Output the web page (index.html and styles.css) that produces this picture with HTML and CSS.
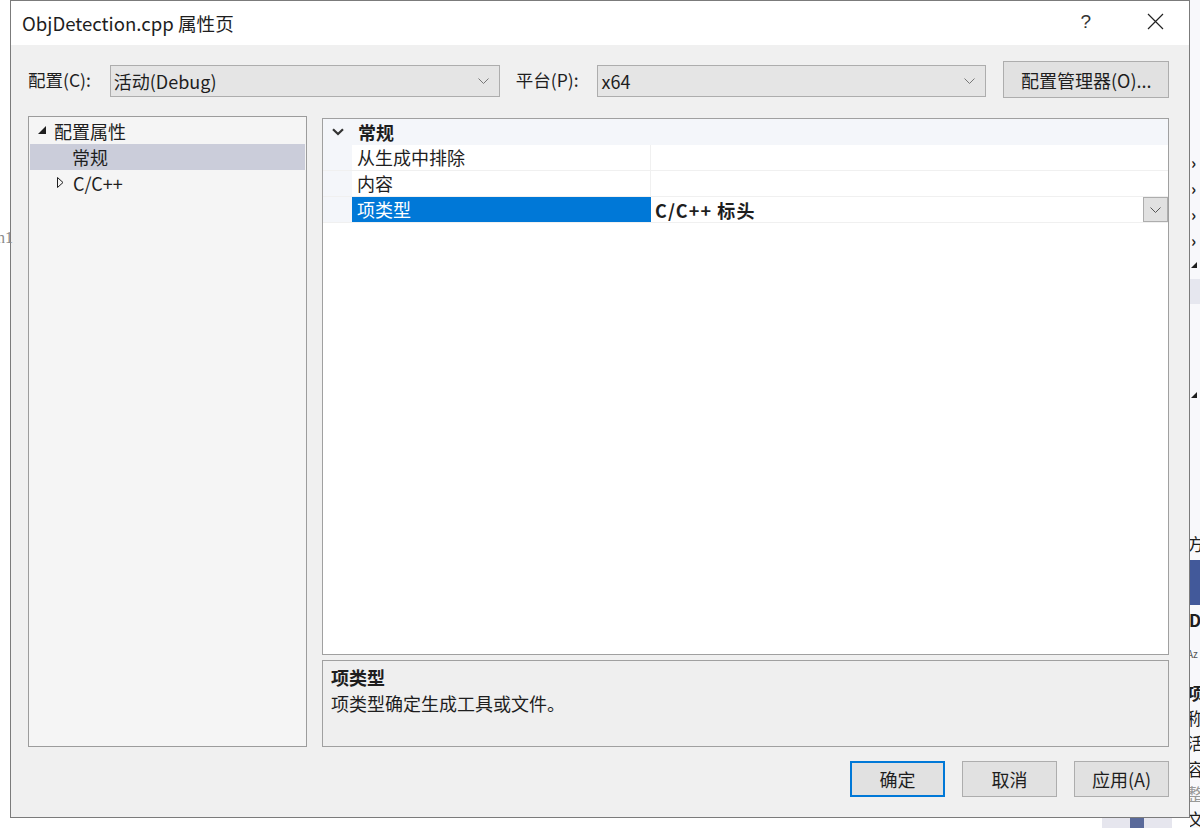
FILE: index.html
```html
<!DOCTYPE html>
<html lang="zh-CN">

<head>
    <meta charset="UTF-8">
    <meta name="viewport" content="width=device-width, initial-scale=1.0">
    <title>ObjDetection.cpp 属性页</title>
    <link rel="stylesheet" href="styles.css">
</head>

<body>
    <div class="desktop">
        <div class="side-left"><span class="stray">n1</span></div>

        <div class="dialog">
            <div class="titlebar">
                <span class="title">ObjDetection.cpp 属性页</span>
                <span class="title-help">?</span>
                <span class="title-close">
                    <svg width="17" height="17" viewBox="0 0 17 17">
                        <path d="M1 1 L16 16 M16 1 L1 16" stroke="#222" stroke-width="1.2" fill="none" />
                    </svg>
                </span>
            </div>

            <div class="content">
                <div class="config-row">
                    <span class="label label-config">配置(C):</span>
                    <div class="combo combo-config">
                        <span>活动(Debug)</span>
                        <svg class="combo-arrow" width="11" height="6" viewBox="0 0 11 6">
                            <path d="M0.5 0.5 L5.5 5.5 L10.5 0.5" stroke="#777" fill="none" />
                        </svg>
                    </div>
                    <span class="label label-platform">平台(P):</span>
                    <div class="combo combo-platform">
                        <span>x64</span>
                        <svg class="combo-arrow" width="11" height="6" viewBox="0 0 11 6">
                            <path d="M0.5 0.5 L5.5 5.5 L10.5 0.5" stroke="#777" fill="none" />
                        </svg>
                    </div>
                    <button class="btn btn-manager">配置管理器(O)...</button>
                </div>

                <div class="main">
                    <div class="tree">
                        <div class="tree-item">
                            <svg class="tree-glyph" width="9" height="9" viewBox="0 0 9 9">
                                <polygon points="8,0 8,8 0,8" fill="#1e1e1e" />
                            </svg>
                            <span>配置属性</span>
                        </div>
                        <div class="tree-item tree-child selected">常规</div>
                        <div class="tree-item tree-sub">
                            <svg class="tree-glyph" width="7" height="11" viewBox="0 0 7 11">
                                <polygon points="0.5,0.5 6,5.5 0.5,10.5" fill="none" stroke="#1e1e1e" />
                            </svg>
                            <span>C/C++</span>
                        </div>
                    </div>

                    <div class="right-col">
                        <div class="grid">
                            <div class="grid-category">
                                <span class="cat-toggle">
                                    <svg width="12" height="8" viewBox="0 0 12 8">
                                        <path d="M1 1.2 L6 6 L11 1.2" stroke="#333" stroke-width="2.2" fill="none" />
                                    </svg>
                                </span>
                                <span class="cat-name">常规</span>
                            </div>
                            <div class="grid-row">
                                <span class="gutter"></span>
                                <span class="prop-name">从生成中排除</span>
                                <span class="prop-value"></span>
                            </div>
                            <div class="grid-row">
                                <span class="gutter"></span>
                                <span class="prop-name">内容</span>
                                <span class="prop-value"></span>
                            </div>
                            <div class="grid-row active">
                                <span class="gutter"></span>
                                <span class="prop-name">项类型</span>
                                <span class="prop-value">
                                    <span class="value-text">C/C++ 标头</span>
                                    <span class="value-drop">
                                        <svg width="11" height="6" viewBox="0 0 11 6">
                                            <path d="M0.5 0.5 L5.5 5.5 L10.5 0.5" stroke="#555" fill="none" />
                                        </svg>
                                    </span>
                                </span>
                            </div>
                        </div>

                        <div class="description">
                            <div class="desc-title">项类型</div>
                            <div class="desc-text">项类型确定生成工具或文件。</div>
                        </div>
                    </div>
                </div>

                <div class="button-row">
                    <button class="btn btn-default">确定</button>
                    <button class="btn">取消</button>
                    <button class="btn">应用(A)</button>
                </div>
            </div>
        </div>

        <!-- edge of the IDE window behind the dialog -->
        <div class="side-right">
            <span class="mark arrow-1">›</span>
            <span class="mark arrow-2">›</span>
            <span class="mark arrow-3">›</span>
            <span class="mark arrow-4">›</span>
            <span class="corner corner-1"></span>
            <span class="band"></span>
            <span class="corner corner-2"></span>
            <span class="edge-text t-fang">方</span>
            <span class="blue-block"></span>
            <span class="edge-text t-d">D</span>
            <span class="edge-text t-az">Az</span>
            <span class="edge-text t-xiang">项</span>
            <span class="edge-text t-cheng">称</span>
            <span class="edge-text t-huo">活</span>
            <span class="edge-text t-rong">容</span>
            <span class="edge-text t-zheng">整</span>
            <span class="edge-text t-wen">文</span>
        </div>

        <!-- tabs of the IDE peeking out under the dialog -->
        <div class="under-strip">
            <span class="under-tab"></span>
            <span class="under-tab dark"></span>
            <span class="under-tab"></span>
        </div>
    </div>
</body>

</html>
```

FILE: styles.css
```css
body {
    margin: 0;
    padding: 0;
    background-color: #ffffff;
    font-family: "Noto Sans CJK SC", "Noto Sans", sans-serif;
    color: #1e1e1e;
    overflow: hidden;
}

.desktop {
    display: flex;
    width: 1200px;
    height: 828px;
    position: relative;
}

.side-left {
    width: 10px;
    flex-shrink: 0;
    position: relative;
}

.stray {
    position: absolute;
    top: 229px;
    left: -3px;
    font-family: "Liberation Serif", serif;
    font-size: 16px;
    color: #8a8a8a;
}

/* dialog window */
.dialog {
    width: 1178px;
    height: 816px;
    flex-shrink: 0;
    border: 1px solid #7b7b7b;
    background-color: #f0f0f0;
    display: flex;
    flex-direction: column;
}

.titlebar {
    height: 44px;
    background-color: #ffffff;
    display: flex;
    align-items: center;
    padding-left: 11px;
}

.title {
    font-size: 18.6px;
    flex: 1;
    margin-top: -2px;
}

.title-help {
    font-family: "Liberation Sans", sans-serif;
    font-size: 19px;
    color: #333;
    margin-right: 56px;
    margin-top: -2px;
}

.title-close {
    display: flex;
    margin-right: 25px;
    margin-top: -3px;
}

.content {
    flex: 1;
    padding: 16px 20px 0 17px;
    display: flex;
    flex-direction: column;
}

/* configuration selectors */
.config-row {
    display: flex;
    align-items: center;
    height: 37px;
}

.label {
    font-size: 17.5px;
}

.label-config {
    width: 82px;
}

.label-platform {
    width: 82px;
    margin-left: 16px;
}

.combo {
    box-sizing: border-box;
    height: 32px;
    margin-top: 3px;
    border: 1px solid #adadad;
    background-color: #e5e5e5;
    display: flex;
    align-items: center;
    padding-left: 3px;
    padding-right: 8px;
    font-size: 18px;
}

.combo span {
    flex: 1;
}

.combo-config {
    width: 391px;
}

.combo-platform {
    width: 390px;
}

.combo-arrow {
    margin-right: 2px;
}

.btn {
    font-family: "Noto Sans CJK SC", "Noto Sans", sans-serif;
    font-size: 18px;
    color: #1e1e1e;
    background-color: #e1e1e1;
    border: 1px solid #adadad;
    padding: 0;
    box-sizing: border-box;
    height: 36px;
    width: 95px;
}

.btn-manager {
    width: 166px;
    height: 37px;
    margin-left: 17px;
}

.btn-default {
    border: 2px solid #0078d7;
}

/* tree and property grid */
.main {
    display: flex;
    margin-top: 18px;
    height: 631px;
}

.tree {
    width: 279px;
    box-sizing: border-box;
    border: 1px solid #9c9c9c;
    background-color: #f5f5f5;
    padding: 1px;
}

.tree-item {
    height: 26px;
    display: flex;
    align-items: center;
    font-size: 18px;
    padding-left: 8px;
}

.tree-item .tree-glyph {
    margin-right: 7px;
    margin-top: -2px;
}

.tree-child {
    padding-left: 42px;
}

.tree-sub {
    padding-left: 27px;
}

.tree-sub .tree-glyph {
    margin-right: 9px;
}

.tree-item.selected {
    background-color: #cbcdda;
}

.right-col {
    flex: 1;
    margin-left: 15px;
    display: flex;
    flex-direction: column;
    padding-top: 2px;
}

.grid {
    height: 538px;
    box-sizing: border-box;
    border: 1px solid #a0a0a0;
    background-color: #ffffff;
}

.grid-category {
    height: 26px;
    background-color: #f4f6fa;
    display: flex;
    align-items: center;
}

.cat-toggle {
    width: 29px;
    display: flex;
    justify-content: center;
    margin-top: -1px;
}

.cat-name {
    font-size: 18px;
    font-weight: bold;
    margin-left: 6px;
}

.grid-row {
    height: 26px;
    display: flex;
    box-sizing: border-box;
    border-bottom: 1px solid #f0f0f0;
}

.gutter {
    width: 29px;
    flex-shrink: 0;
    background-color: #f4f6fa;
}

.prop-name {
    width: 299px;
    flex-shrink: 0;
    box-sizing: border-box;
    border-right: 1px solid #f0f0f0;
    padding-left: 5px;
    font-size: 18px;
    line-height: 25px;
}

.prop-value {
    flex: 1;
    display: flex;
    align-items: center;
}

.grid-row.active .prop-name {
    background-color: #0078d7;
    color: #ffffff;
    border-right: none;
}

.value-text {
    flex: 1;
    font-size: 18px;
    font-weight: bold;
    padding-left: 4px;
    letter-spacing: 1.1px;
}

.value-drop {
    width: 25px;
    height: 25px;
    box-sizing: border-box;
    border: 1px solid #adadad;
    background-color: #e1e1e1;
    display: flex;
    align-items: center;
    justify-content: center;
}

.description {
    margin-top: 5px;
    height: 87px;
    box-sizing: border-box;
    border: 1px solid #a0a0a0;
    background-color: #efefef;
    padding: 3px 8px;
}

.desc-title {
    font-size: 18px;
    font-weight: bold;
    line-height: 26px;
}

.desc-text {
    font-size: 18px;
    line-height: 26px;
}

.button-row {
    display: flex;
    justify-content: flex-end;
    gap: 17px;
    margin-top: 14px;
}

/* strip of the IDE window on the right */
.side-right {
    flex: 1;
    position: relative;
    background-color: #f8f8fb;
    overflow: hidden;
}

.mark {
    position: absolute;
    left: 1px;
    font-size: 16px;
    font-weight: bold;
    color: #222;
}

.arrow-1 { top: 150px; }
.arrow-2 { top: 176px; }
.arrow-3 { top: 202px; }
.arrow-4 { top: 228px; }

.corner {
    position: absolute;
    left: 1px;
    width: 0;
    height: 0;
    border-left: 6px solid transparent;
    border-bottom: 6px solid #1e1e1e;
}

.corner-1 { top: 262px; }
.corner-2 { top: 392px; }

.band {
    position: absolute;
    top: 279px;
    left: 0;
    width: 10px;
    height: 25px;
    background-color: #e6e7ef;
}

.blue-block {
    position: absolute;
    top: 560px;
    left: 0;
    width: 10px;
    height: 45px;
    background-color: #42599a;
}

.edge-text {
    position: absolute;
    left: -3px;
    font-size: 17px;
    line-height: 20px;
    color: #1e1e1e;
}

.t-fang { top: 534px; }
.t-d { top: 610px; font-weight: bold; left: -1px; }
.t-az { top: 644px; font-size: 10px; color: #555; }
.t-xiang { top: 683px; font-weight: bold; }
.t-cheng { top: 708px; }
.t-huo { top: 733px; }
.t-rong { top: 759px; }
.t-zheng { top: 784px; color: #999; }
.t-wen { top: 809px; }

.under-strip {
    position: absolute;
    left: 1102px;
    top: 818px;
    display: flex;
}

.under-tab {
    width: 28px;
    height: 10px;
    background-color: #e6e6ee;
}

.under-tab.dark {
    width: 14px;
    background-color: #5a6a9a;
}
```
